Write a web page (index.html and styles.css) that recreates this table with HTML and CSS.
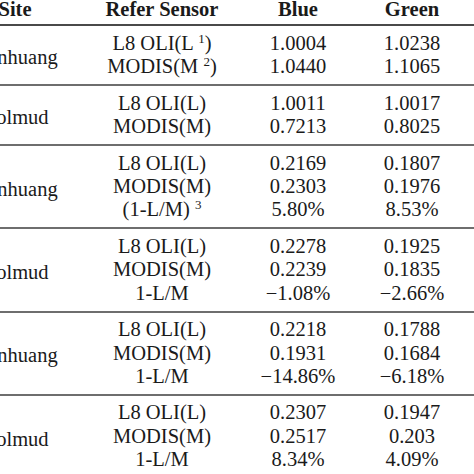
FILE: index.html
```html
<!DOCTYPE html>
<html>
<head>
<meta charset="utf-8">
<link rel="stylesheet" href="styles.css">
</head>
<body>
<table class="data">
  <colgroup>
    <col class="c-site"><col class="c-sensor"><col class="c-blue"><col class="c-green">
  </colgroup>
  <thead>
    <tr><th>Site</th><th>Refer Sensor</th><th>Blue</th><th>Green</th></tr>
  </thead>
  <tbody>
    <tr class="first"><td class="site" rowspan="2">Dunhuang</td><td>L8 OLI(L <sup>1</sup>)</td><td>1.0004</td><td>1.0238</td></tr>
    <tr class="last"><td>MODIS(M <sup>2</sup>)</td><td>1.0440</td><td>1.1065</td></tr>
  </tbody>
  <tbody>
    <tr class="first"><td class="site" rowspan="2">Golmud</td><td>L8 OLI(L)</td><td>1.0011</td><td>1.0017</td></tr>
    <tr class="last"><td>MODIS(M)</td><td>0.7213</td><td>0.8025</td></tr>
  </tbody>
  <tbody>
    <tr class="first"><td class="site" rowspan="3">Dunhuang</td><td>L8 OLI(L)</td><td>0.2169</td><td>0.1807</td></tr>
    <tr><td>MODIS(M)</td><td>0.2303</td><td>0.1976</td></tr>
    <tr class="last"><td>(1-L/M) <sup>3</sup></td><td>5.80%</td><td>8.53%</td></tr>
  </tbody>
  <tbody>
    <tr class="first"><td class="site" rowspan="3">Golmud</td><td>L8 OLI(L)</td><td>0.2278</td><td>0.1925</td></tr>
    <tr><td>MODIS(M)</td><td>0.2239</td><td>0.1835</td></tr>
    <tr class="last"><td>1-L/M</td><td>−1.08%</td><td>−2.66%</td></tr>
  </tbody>
  <tbody>
    <tr class="first"><td class="site" rowspan="3">Dunhuang</td><td>L8 OLI(L)</td><td>0.2218</td><td>0.1788</td></tr>
    <tr><td>MODIS(M)</td><td>0.1931</td><td>0.1684</td></tr>
    <tr class="last"><td>1-L/M</td><td>−14.86%</td><td>−6.18%</td></tr>
  </tbody>
  <tbody>
    <tr class="first"><td class="site" rowspan="3">Golmud</td><td>L8 OLI(L)</td><td>0.2307</td><td>0.1947</td></tr>
    <tr><td>MODIS(M)</td><td>0.2517</td><td>0.203</td></tr>
    <tr class="last"><td>1-L/M</td><td>8.34%</td><td>4.09%</td></tr>
  </tbody>
</table>
</body>
</html>
```

FILE: styles.css
```css
html, body {
  margin: 0;
  padding: 0;
  background: #ffffff;
  overflow: hidden;
}

.data {
  font-family: "Liberation Serif", "Times New Roman", serif;
  font-size: 20.5px;
  color: #1a1a1a;
  border-collapse: collapse;
  table-layout: fixed;
  width: 522px;
  margin-top: -3px;
  margin-left: -45px;
}

.c-site { width: 120px; }
.c-sensor { width: 174px; }
.c-blue { width: 98px; }
.c-green { width: 130px; }

.data th {
  font-weight: bold;
  text-align: center;
  line-height: 24px;
  padding: 0 0 3px 0;
  border-bottom: 2px solid #4a4a4a;
}

.data td {
  text-align: center;
  line-height: 23.33px;
  padding: 0;
  vertical-align: middle;
  white-space: nowrap;
}

.data tr.first td {
  padding-top: 5.67px;
}

.data tr.last td {
  padding-bottom: 5.67px;
}

.data td.site {
  padding-top: 0;
  padding-bottom: 0;
}

.data tbody + tbody {
  border-top: 2px solid #6e6e6e;
}

.data sup {
  font-size: 13px;
  line-height: 0;
  vertical-align: 7px;
}
```
